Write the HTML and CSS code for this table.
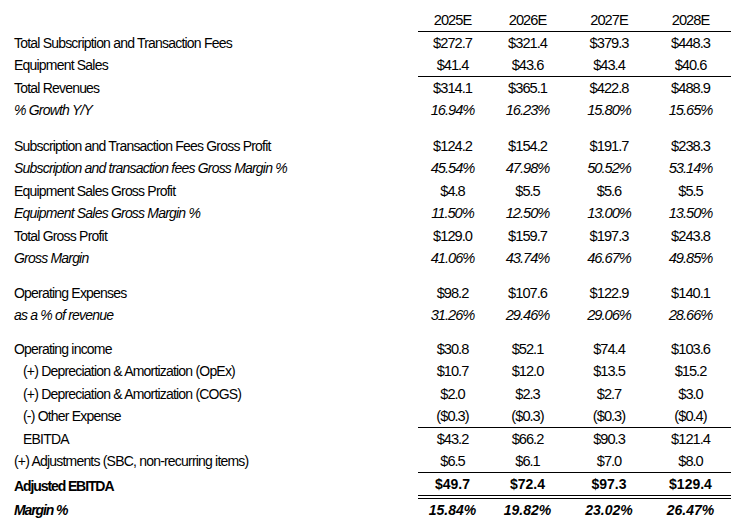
FILE: index.html
```html
<!DOCTYPE html>
<html lang="en">
<head>
<meta charset="utf-8">
<title>Financial Projections</title>
<link rel="stylesheet" href="styles.css">
</head>
<body>
<div class="sheet">
  <div class="row head rule">
    <div class="label"></div>
    <div class="num">2025E</div><div class="num">2026E</div><div class="num">2027E</div><div class="num">2028E</div>
  </div>
  <div class="row">
    <div class="label">Total Subscription and Transaction Fees</div>
    <div class="num">$272.7</div><div class="num">$321.4</div><div class="num">$379.3</div><div class="num">$448.3</div>
  </div>
  <div class="row rule">
    <div class="label">Equipment Sales</div>
    <div class="num">$41.4</div><div class="num">$43.6</div><div class="num">$43.4</div><div class="num">$40.6</div>
  </div>
  <div class="row">
    <div class="label">Total Revenues</div>
    <div class="num">$314.1</div><div class="num">$365.1</div><div class="num">$422.8</div><div class="num">$488.9</div>
  </div>
  <div class="row ital">
    <div class="label">% Growth Y/Y</div>
    <div class="num">16.94%</div><div class="num">16.23%</div><div class="num">15.80%</div><div class="num">15.65%</div>
  </div>

  <div class="gap gap-a"></div>

  <div class="row">
    <div class="label">Subscription and Transaction Fees Gross Profit</div>
    <div class="num">$124.2</div><div class="num">$154.2</div><div class="num">$191.7</div><div class="num">$238.3</div>
  </div>
  <div class="row ital">
    <div class="label">Subscription and transaction fees Gross Margin %</div>
    <div class="num">45.54%</div><div class="num">47.98%</div><div class="num">50.52%</div><div class="num">53.14%</div>
  </div>
  <div class="row">
    <div class="label">Equipment Sales Gross Profit</div>
    <div class="num">$4.8</div><div class="num">$5.5</div><div class="num">$5.6</div><div class="num">$5.5</div>
  </div>
  <div class="row ital">
    <div class="label">Equipment Sales Gross Margin %</div>
    <div class="num">11.50%</div><div class="num">12.50%</div><div class="num">13.00%</div><div class="num">13.50%</div>
  </div>
  <div class="row">
    <div class="label">Total Gross Profit</div>
    <div class="num">$129.0</div><div class="num">$159.7</div><div class="num">$197.3</div><div class="num">$243.8</div>
  </div>
  <div class="row ital">
    <div class="label">Gross Margin</div>
    <div class="num">41.06%</div><div class="num">43.74%</div><div class="num">46.67%</div><div class="num">49.85%</div>
  </div>

  <div class="gap gap-b"></div>

  <div class="row">
    <div class="label">Operating Expenses</div>
    <div class="num">$98.2</div><div class="num">$107.6</div><div class="num">$122.9</div><div class="num">$140.1</div>
  </div>
  <div class="row ital">
    <div class="label">as a % of revenue</div>
    <div class="num">31.26%</div><div class="num">29.46%</div><div class="num">29.06%</div><div class="num">28.66%</div>
  </div>

  <div class="gap gap-c"></div>

  <div class="row">
    <div class="label">Operating income</div>
    <div class="num">$30.8</div><div class="num">$52.1</div><div class="num">$74.4</div><div class="num">$103.6</div>
  </div>
  <div class="row">
    <div class="label indent">(+) Depreciation &amp; Amortization (OpEx)</div>
    <div class="num">$10.7</div><div class="num">$12.0</div><div class="num">$13.5</div><div class="num">$15.2</div>
  </div>
  <div class="row">
    <div class="label indent">(+) Depreciation &amp; Amortization (COGS)</div>
    <div class="num">$2.0</div><div class="num">$2.3</div><div class="num">$2.7</div><div class="num">$3.0</div>
  </div>
  <div class="row rule">
    <div class="label indent">(-) Other Expense</div>
    <div class="num">($0.3)</div><div class="num">($0.3)</div><div class="num">($0.3)</div><div class="num">($0.4)</div>
  </div>
  <div class="row">
    <div class="label indent">EBITDA</div>
    <div class="num">$43.2</div><div class="num">$66.2</div><div class="num">$90.3</div><div class="num">$121.4</div>
  </div>
  <div class="row rule">
    <div class="label">(+) Adjustments (SBC, non-recurring items)</div>
    <div class="num">$6.5</div><div class="num">$6.1</div><div class="num">$7.0</div><div class="num">$8.0</div>
  </div>
  <div class="row bold double">
    <div class="label">Adjusted EBITDA</div>
    <div class="num">$49.7</div><div class="num">$72.4</div><div class="num">$97.3</div><div class="num">$129.4</div>
  </div>
  <div class="row bold ital">
    <div class="label">Margin %</div>
    <div class="num">15.84%</div><div class="num">19.82%</div><div class="num">23.02%</div><div class="num">26.47%</div>
  </div>
</div>
</body>
</html>
```

FILE: styles.css
```css
html, body {
  margin: 0;
  padding: 0;
  background: #ffffff;
}

.sheet {
  padding-top: 9px;
  color: #000000;
}

.row {
  display: grid;
  grid-template-columns: 418px 69px 81px 82px 81px;
  height: 22.5px;
  box-sizing: border-box;
}

.label {
  display: flex;
  align-items: center;
  padding-left: 14px;
  font-family: "Liberation Sans", Arial, sans-serif;
  font-size: 14px;
  letter-spacing: -0.8px;
  white-space: nowrap;
}

.label.indent {
  padding-left: 23px;
}

.num {
  display: flex;
  align-items: center;
  justify-content: center;
  font-family: "Liberation Sans", Arial, sans-serif;
  font-size: 14.67px;
  letter-spacing: -1px;
  white-space: nowrap;
}

.rule .num {
  border-bottom: 1px solid #000000;
}

.double {
  height: 26.5px;
}

.double .num {
  border-bottom: 4px double #000000;
}

.ital .label,
.ital .num {
  font-style: italic;
}

.bold .label,
.bold .num {
  font-weight: 700;
}

.bold .label {
  letter-spacing: -1.1px;
}

.bold .num {
  font-size: 14px;
  letter-spacing: 0;
}

.gap-a { height: 13px; }
.gap-b { height: 12px; }
.gap-c { height: 11px; }
```
